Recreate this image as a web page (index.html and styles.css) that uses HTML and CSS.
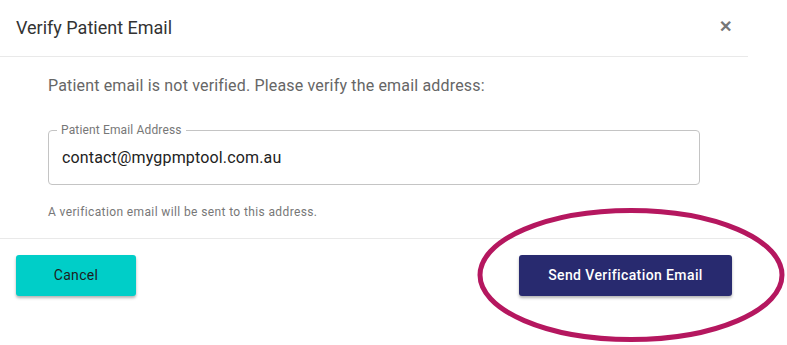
FILE: index.html
```html
<!DOCTYPE html>
<html>
<head>
<meta charset="utf-8">
<link rel="stylesheet" href="styles.css">
</head>
<body>
<div class="dialog">
  <div class="header">
    <div class="title">Verify Patient Email</div>
    <div class="close">&#x2715;</div>
  </div>
  <div class="content">
    <p class="message">Patient email is not verified. Please verify the email address:</p>
    <fieldset class="field">
      <legend>Patient Email Address</legend>
      <div class="value">contact@mygpmptool.com.au</div>
    </fieldset>
    <p class="hint">A verification email will be sent to this address.</p>
  </div>
  <div class="footer">
    <button class="btn cancel">Cancel</button>
    <button class="btn send">Send Verification Email</button>
  </div>
</div>
<svg class="ring" width="320" height="145" viewBox="0 0 320 145">
  <ellipse cx="155" cy="69" rx="151" ry="64.5" fill="none" stroke="#b5175f" stroke-width="5"/>
</svg>
</body>
</html>
```

FILE: styles.css
```css
html, body {
  margin: 0;
  padding: 0;
  background: #ffffff;
}
body {
  font-family: Roboto, "Liberation Sans", sans-serif;
  width: 787px;
  height: 345px;
  overflow: hidden;
  position: relative;
}
.dialog {
  width: 748px;
  background: #fff;
}
.header {
  height: 57px;
  box-sizing: border-box;
  border-bottom: 1px solid #e9e9e9;
  display: flex;
  align-items: center;
  justify-content: space-between;
  padding: 0 16px 2px 16px;
}
.title {
  font-size: 18px;
  color: #333;
}
.close {
  font-size: 16px;
  font-weight: bold;
  color: #777;
  padding-bottom: 1px;
}
.content {
  padding: 18px 48px 0 48px;
  height: 163px;
  border-bottom: 1px solid #e9e9e9;
}
.message {
  margin: 0;
  font-size: 16px;
  color: #666;
  line-height: 22px;
  letter-spacing: 0.17px;
}
.field {
  margin: 27px 0 0 0;
  width: 652px;
  height: 61px;
  box-sizing: border-box;
  border: 1px solid #c4c4c4;
  border-radius: 4px;
  padding: 0 13px;
}
.field legend {
  font-size: 12px;
  color: #777;
  padding: 0 4px;
  margin-left: -5px;
  line-height: 12px;
  letter-spacing: 0.15px;
}
.value {
  font-size: 16px;
  color: #222;
  line-height: 20px;
  margin-top: 12px;
  letter-spacing: 0.16px;
}
.hint {
  margin: 20px 0 0 0;
  font-size: 12px;
  color: #777;
  letter-spacing: 0.38px;
}
.footer {
  display: flex;
  justify-content: space-between;
  padding: 16px 16px 0 16px;
}
.btn {
  border: none;
  border-radius: 3px;
  height: 41px;
  padding: 0 0 2px 0;
  font-family: Roboto, "Liberation Sans", sans-serif;
  font-size: 14px;
  box-shadow: 0 2px 3px rgba(0,0,0,0.3);
}
.cancel {
  width: 120px;
  background: #00cec8;
  color: #1d1d1d;
  letter-spacing: 0.3px;
}
.send {
  width: 213px;
  background: #282a6f;
  color: #fff;
  font-weight: 500;
  letter-spacing: 0.4px;
}
.ring {
  position: absolute;
  left: 476px;
  top: 206px;
}
```
